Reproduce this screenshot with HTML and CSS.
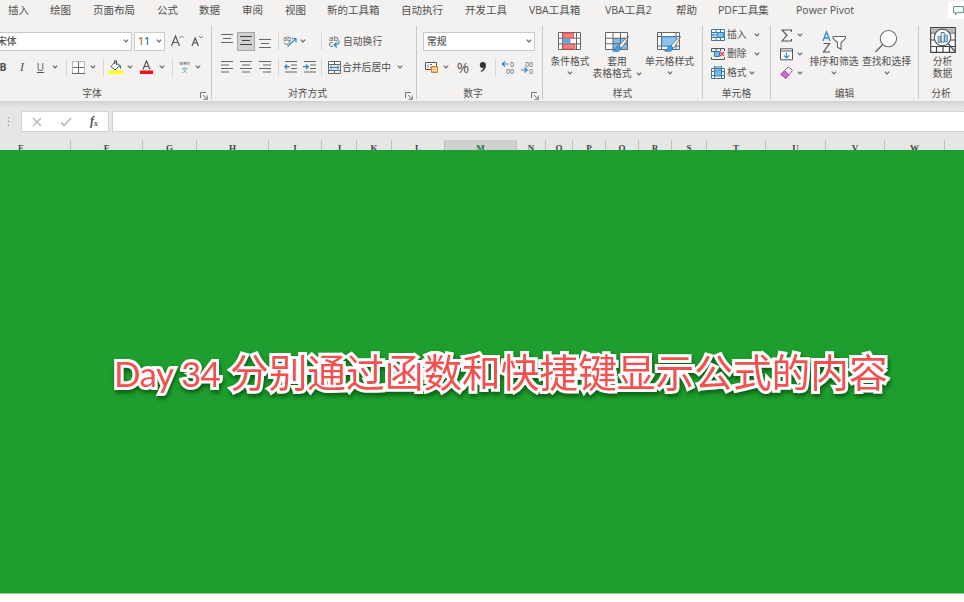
FILE: index.html
```
<!DOCTYPE html>
<html lang="zh-CN">
<head>
<meta charset="UTF-8">
<title>Day 34</title>
<link rel="stylesheet" href="styles.css">
</head>
<body>

<svg class="defs">
    <symbol id="chev" viewBox="0 0 6 4"><path d="M.8.7 3 2.9 5.2.7" fill="none" stroke="#666" stroke-width="1.2"/></symbol>
    <symbol id="launch" viewBox="0 0 8 8"><path d="M.5 6V.5H6M3 3l4 4M7.3 3.5v3.8H3.5" fill="none" stroke="#666" stroke-width=".9"/></symbol>
    <symbol id="brush" viewBox="0 0 18 17">
        <path d="M17 1C13 4 9.500 7.500 7.500 10.500l2.500 2C12.500 9.500 15.500 5 17 1z" fill="#fff" stroke="#666" stroke-width=".9"/>
        <path d="M7.300 10.500c-2-.3-3.300 1-3.500 2.800-.2 1.200-1.300 1.700-2.800 2 3.500 1.500 8 1 8.800-2.700z" fill="#3f9bdc" stroke="#1e78ba" stroke-width=".6"/>
    </symbol>
</svg>

<nav class="tabs">
    <span>插入</span>
    <span>绘图</span>
    <span>页面布局</span>
    <span>公式</span>
    <span>数据</span>
    <span>审阅</span>
    <span>视图</span>
    <span>新的工具箱</span>
    <span>自动执行</span>
    <span>开发工具</span>
    <span>VBA工具箱</span>
    <span>VBA工具2</span>
    <span>帮助</span>
    <span>PDF工具集</span>
    <span>Power Pivot</span>
    <div class="comment"><svg width="11" height="10" viewBox="0 0 11 10"><path d="M.6.600h9.800v6H4.500L2.500 8.800V6.600H.6z" fill="none" stroke="#5c8a86"/></svg></div>
</nav>

<div class="ribbon">
    <!-- font -->
    <section class="group font">
        <div class="tools">
            <div class="row font-top">
                <div class="combo"><b>宋体</b><svg class="chev"><use href="#chev"/></svg></div>
                <div class="combo size"><b><i class="o">1</i><i class="b">1</i></b><svg class="chev"><use href="#chev"/></svg></div>
                <svg width="15" height="15" viewBox="0 0 15 15"><path d="M1.500 12 5.500 2 9.500 12M3 8.500h5" fill="none" stroke="#555" stroke-width="1.200"/><path d="M9.500 4l2-2 2 2" fill="none" stroke="#4a88a8"/></svg>
                <svg width="13" height="15" viewBox="0 0 13 15"><path d="M1 12 4.200 4 7.400 12M2.200 9h4" fill="none" stroke="#555" stroke-width="1.200"/><path d="M8 2l2 2 2-2" fill="none" stroke="#4a88a8"/></svg>
            </div>
            <div class="row font-bottom">
                <span class="bold">B</span>
                <span class="italic">I</span>
                <span class="under">U</span>
                <svg class="chev"><use href="#chev"/></svg>
                <span class="sep"></span>
                <svg width="13" height="13" viewBox="0 0 13 13"><path d="M.5.500h12v12H.5z" fill="#fff" stroke="#777" stroke-dasharray="1 1"/><path d="M6.500 1v11M1 6.500h11M0 12.500h13" stroke="#666"/></svg>
                <svg class="chev"><use href="#chev"/></svg>
                <span class="sep"></span>
                <svg width="14" height="14" viewBox="0 0 14 14"><path d="M6 2 2 6.500l4 3.500 4.500-4.500zM5.500 4V.8h2V5" fill="#fff" stroke="#555"/><path d="M10 4.500c2 0 2.300 2 2 4.500-1.200-.5-1.500-2-2-4.500z" fill="#2874a8"/><path fill="#ffff18" d="M0 10.500h14V14H0z"/></svg>
                <svg class="chev"><use href="#chev"/></svg>
                <svg width="13" height="14" viewBox="0 0 13 14"><path d="M3 9.500 6.500.8 10 9.500M4.300 6.500h4.500" fill="none" stroke="#555" stroke-width="1.200"/><path fill="#f50d17" d="M0 10.500h13V14H0z"/></svg>
                <svg class="chev"><use href="#chev"/></svg>
                <span class="sep"></span>
                <span class="wen"><span>wén</span><em>文</em></span>
                <svg class="chev"><use href="#chev"/></svg>
            </div>
        </div>
        <footer><span>字体</span><svg class="launch"><use href="#launch"/></svg></footer>
    </section>

    <!-- alignment -->
    <section class="group align">
        <div class="tools">
            <div class="row align-top">
                <svg width="12" height="14" viewBox="0 0 12 14"><path d="M0 .5h12M2 4.500h8M0 8.500h12" stroke="#666"/></svg>
                <span class="pressed"><svg width="12" height="14" viewBox="0 0 12 14"><path d="M0 2.500h12M2 6.500h8M0 10.500h12" stroke="#444" stroke-width="1.200"/></svg></span>
                <svg width="12" height="14" viewBox="0 0 12 14"><path d="M0 5.500h12M2 9.500h8M0 13.500h12" stroke="#666"/></svg>
                <span class="sep"></span>
                <svg width="14" height="14" viewBox="0 0 14 14"><text x="0" y="7" class="tiny">ab</text><path d="M1 8.500 3.500 11l4-4" fill="none" stroke="#666"/><path d="M4.500 12.500 12.500 5M9 4.500h4v4" fill="none" stroke="#3d8fc0" stroke-width="1.200"/></svg>
                <svg class="chev"><use href="#chev"/></svg>
                <span></span>
                <span class="sep"></span>
                <svg width="12" height="14" viewBox="0 0 12 14"><text x="1" y="7" class="ab">ab</text><path d="M4.500 8.500c-4-.5-4 4.500 0 4" fill="none" stroke="#555"/><path d="M11 6.500c.5 3-1 4.500-4.500 4.500M8.800 8.500 6 11l2.800 2.500" fill="none" stroke="#2b8bc8" stroke-width="1.200"/></svg>
                <span class="txt">自动换行</span>
            </div>
            <div class="row align-bottom">
                <svg width="12" height="12" viewBox="0 0 12 12"><path d="M0 .5h12M0 4h8M0 7.500h12M0 11h8" stroke="#666"/></svg>
                <svg width="12" height="12" viewBox="0 0 12 12"><path d="M0 .5h12M2 4h8M0 7.500h12M2 11h8" stroke="#666"/></svg>
                <svg width="12" height="12" viewBox="0 0 12 12"><path d="M0 .5h12M4 4h8M0 7.500h12M4 11h8" stroke="#666"/></svg>
                <span class="sep"></span>
                <svg width="13" height="12" viewBox="0 0 13 12"><path d="M1 .5h12M7 4h6M7 7.500h6M1 11h12" stroke="#666"/><path d="M.8 5.700h5M3 3.500.8 5.700 3 8" fill="none" stroke="#2b83bd" stroke-width="1.200"/></svg>
                <svg width="13" height="12" viewBox="0 0 13 12"><path d="M1 .5h12M7 4h6M7 7.500h6M1 11h12" stroke="#666"/><path d="M0 5.700h5M3 3.500 5.200 5.700 3 8" fill="none" stroke="#2b83bd" stroke-width="1.200"/></svg>
                <span class="sep"></span>
                <span></span>
                <svg width="13" height="13" viewBox="0 0 13 13"><path d="M.5.500h12v12H.5zM.5 3.500h12M.5 9.500h12M6.500 0v3.500M6.500 9.500V13" fill="#fff" stroke="#666"/><path fill="#d8edf9" d="M1 4h11v5H1z"/><path d="M2 6.500h9M4 4.700 2 6.500l2 1.800M9 4.700l2 1.800-2 1.800" fill="none" stroke="#2b83bd"/></svg>
                <span class="txt">合并后居中</span>
                <svg class="chev"><use href="#chev"/></svg>
            </div>
        </div>
        <footer><span>对齐方式</span><svg class="launch"><use href="#launch"/></svg></footer>
    </section>

    <!-- number -->
    <section class="group number">
        <div class="tools">
            <div class="row number-top">
                <div class="combo"><b>常规</b><svg class="chev"><use href="#chev"/></svg></div>
            </div>
            <div class="row number-bottom">
                <svg width="14" height="12" viewBox="0 0 14 12"><path d="M.5 1.500h11v7H.5z" fill="#fff" stroke="#555"/><path d="M3 3.500v3M5 3.500h2M5 6.500h2" stroke="#666"/><path d="M6.500 5.500h6v6h-6z" fill="#f6b26b" stroke="#e07a1c"/><path d="M7 7.500h5M7 9.500h5" stroke="#fff" stroke-width=".7"/></svg>
                <svg class="chev"><use href="#chev"/></svg>
                <span class="percent">%</span>
                <svg width="8" height="12" viewBox="0 0 8 12"><circle cx="3.800" cy="4" r="3" fill="#333"/><path d="M6.800 4c.2 3.500-1.800 6-4.800 7l-.4-.9C3.600 9 4.500 7.800 4.600 6z" fill="#333"/></svg>
                <span class="sep"></span>
                <svg width="14" height="14" viewBox="0 0 14 14"><path d="M7.500 4H1.500M4 1.500 1.300 4 4 6.500" fill="none" stroke="#2b8bc8" stroke-width="1.200"/><text x="9" y="6.500" class="zero">0</text><text x="5" y="13.500" class="zero">00</text></svg>
                <svg width="14" height="14" viewBox="0 0 14 14"><path d="M1 10h6M4.500 7.500 7.200 10l-2.700 2.500" fill="none" stroke="#2b8bc8" stroke-width="1.200"/><text x="5" y="6.500" class="zero">00</text><text x="9" y="13.500" class="zero">0</text></svg>
            </div>
        </div>
        <footer><span>数字</span><svg class="launch"><use href="#launch"/></svg></footer>
    </section>

    <!-- styles -->
    <section class="group style">
        <div class="tools bigs">
            <div class="big">
                <svg width="24" height="24" viewBox="0 0 24 24"><path d="M.5 3.500h22v17H.5zM.5 9.200h22M.5 14.800h22M4.500 3.500v17M18.500 3.500v17" fill="#fff" stroke="#666"/><path d="M5 4h10.500v5H5zM5 15.300h12V20H5z" fill="#f87c80" stroke="#e5484d" stroke-width=".8"/><path d="M4.500 9.500h8v5h-8z" fill="#5aa9e3"/></svg>
                <span>条件格式</span>
                <svg class="chev"><use href="#chev"/></svg>
            </div>
            <div class="big">
                <svg width="25" height="24" viewBox="0 0 25 24"><path d="M.5 3.500h22v17H.5z" fill="#fff"/><path fill="#7dbdec" d="M8 9h15v11.500H8z"/><path d="M.5 3.500h22v17H.5zM.5 9.200h22M.5 14.800h22M8 3.500v17M15.500 3.500v17" fill="none" stroke="#666"/><use href="#brush" x="6.500" y="6" width="18" height="18"/></svg>
                <span>套用</span>
                <span class="inline">表格格式<svg class="chev"><use href="#chev"/></svg></span>
            </div>
            <div class="big">
                <svg width="25" height="24" viewBox="0 0 25 24"><path d="M.5 3.500h22v17H.5z" fill="#fff"/><path d="M.5 3.500h22v17H.5zM.5 7.500h22M4.500 3.500v17M19 3.500v17M.5 17h22" fill="none" stroke="#666"/><path fill="#8cc6ef" stroke="#4399d6" d="M5 8h14v9H5z"/><use href="#brush" x="6.500" y="6" width="18" height="18"/></svg>
                <span>单元格样式</span>
                <svg class="chev"><use href="#chev"/></svg>
            </div>
        </div>
        <footer><span>样式</span></footer>
    </section>

    <!-- cells -->
    <section class="group cells">
        <div class="tools stack">
            <div class="line">
                <svg width="14" height="12" viewBox="0 0 14 12"><path d="M.5.500h13v11H.5zM.5 3.500h13M.5 8.500h13M5 .5v3M9.500 .5v3M5 8.500v3M9.500 8.500v3" fill="#fff" stroke="#4c7391"/><path d="M6 3.500h7v5H6z" fill="#75b9ea" stroke="#2b83bd"/><path d="M1 6h5M3.500 4 1.500 6l2 2" fill="none" stroke="#2b83bd"/></svg>
                <span>插入</span>
                <svg class="chev"><use href="#chev"/></svg>
            </div>
            <div class="line">
                <svg width="14" height="12" viewBox="0 0 14 12"><path d="M.5 3V.5h13V3M.5 9v2.500h13V9M5 .5v2.500M9.500 .5v2.500M0 3.500h5" fill="none" stroke="#555"/><path d="M3.500 3.500h5v5h-5z" fill="#75b9ea" stroke="#2b83bd"/><path d="m9 4 4 4m0-4L9 8" stroke="#dc3f45" stroke-width="1.300"/></svg>
                <span>删除</span>
                <svg class="chev"><use href="#chev"/></svg>
            </div>
            <div class="line">
                <svg width="14" height="13" viewBox="0 0 14 13"><path d="M.5 2.500h13v10H.5zM.5 5.500h13M.5 9.500h13M3.500 0v12.500M10.500 0v12.500" fill="#fff" stroke="#4c7391"/><path d="M3.500 4h7v6h-7z" fill="#75b9ea" stroke="#2b83bd"/><path d="M3.500 1h7" stroke="#2b83bd"/></svg>
                <span>格式</span>
                <svg class="chev near"><use href="#chev"/></svg>
            </div>
        </div>
        <footer><span>单元格</span></footer>
    </section>

    <!-- editing -->
    <section class="group edit">
        <div class="tools">
            <div class="stack">
                <div class="line">
                    <svg width="14" height="13" viewBox="0 0 14 13"><path d="M11.500 3V1H2l5 5.300L2 12h9.500v-2" fill="none" stroke="#555" stroke-width="1.100"/></svg>
                    <svg class="chev"><use href="#chev"/></svg>
                </div>
                <div class="line">
                    <svg width="14" height="13" viewBox="0 0 14 13"><path d="M.5.800h12v11H.5zM.5 3h12" fill="#fff" stroke="#555"/><path d="M6.500 4.500V10M4 7.500l2.500 2.500L9 7.500" fill="none" stroke="#2b8bc8" stroke-width="1.200"/></svg>
                    <svg class="chev"><use href="#chev"/></svg>
                </div>
                <div class="line">
                    <svg width="14" height="13" viewBox="0 0 14 13"><path d="M8 .8 12.500 4.300 6 12.300 1 8.500z" fill="#fff" stroke="#b144b5"/><path d="M4.500 4.700 9 8.600 6 12.300 1 8.500z" fill="#c873cc" stroke="#b144b5"/></svg>
                    <svg class="chev"><use href="#chev"/></svg>
                </div>
            </div>
            <div class="big">
                <svg width="25" height="24" viewBox="0 0 25 24"><path d="M1 12 4.500 2.800 8 12M2.200 9h4.600" fill="none" stroke="#2b8bc8" stroke-width="1.300"/><path d="M1.500 14.500h6L1.500 23h6.500" fill="none" stroke="#555" stroke-width="1.200"/><path d="M11 7.500h12.500v1.800L19 13.800v6.500l-3.500-2v-4.500L11 9.300z" fill="#fff" stroke="#666" stroke-width="1.100"/></svg>
                <span>排序和筛选</span>
                <svg class="chev"><use href="#chev"/></svg>
            </div>
            <div class="big">
                <svg width="25" height="25" viewBox="0 0 25 25"><circle cx="14.500" cy="10" r="8.500" fill="#fff" stroke="#666" stroke-width="1.100"/><path d="M8.500 16.200 1 24" stroke="#666" stroke-width="1.400"/></svg>
                <span>查找和选择</span>
                <svg class="chev"><use href="#chev"/></svg>
            </div>
        </div>
        <footer><span>编辑</span></footer>
    </section>

    <!-- analysis -->
    <section class="group analyse">
        <div class="tools bigs">
            <div class="big">
                <svg width="26" height="26" viewBox="0 0 26 26"><path d="M.7.700h24.600v24.600H.7zM.7 6h24.600M.7 19.500h24.600M.7 13h24.600M6.500 19v6M13 19v6M19.500 19v6" fill="#fff" stroke="#444" stroke-width="1.200"/><path d="M1 1h24v4H1z" fill="#bbb"/><circle cx="12.500" cy="10.500" r="8.300" fill="#fff" stroke="#555" stroke-width="1.200"/><path d="M8 9.500h3v6H8zM14.500 8h3v7h-3z" fill="#9ccbec" stroke="#4586ae" stroke-width=".8"/><path d="M11.200 5.500h3V15h-3z" fill="#fff" stroke="#356d91" stroke-width=".9"/><path d="m18.500 17 6.500 7.500" stroke="#555" stroke-width="1.500"/></svg>
                <span>分析</span>
                <span>数据</span>
            </div>
        </div>
        <footer><span>分析</span></footer>
    </section>
</div>

<div class="formula">
    <svg class="grip" width="3" height="11" viewBox="0 0 3 11"><path d="M1.500 1v9" stroke="#999" stroke-width="1.300" stroke-dasharray="1.300 2.500"/></svg>
    <div class="fx">
        <svg width="10" height="10" viewBox="0 0 10 10"><path d="m1 1 8 8m0-8L1 9" stroke="#b5b5b5" stroke-width="1.300"/></svg>
        <svg width="12" height="10" viewBox="0 0 12 10"><path d="M1 5.500 4 8.500 11 1" fill="none" stroke="#b5b5b5" stroke-width="1.700"/></svg>
        <span><i>f</i><sub>x</sub></span>
    </div>
    <div class="input"></div>
</div>

<div class="columns">
    <span>E</span><span>F</span><span>G</span><span>H</span><span>I</span><span>J</span><span>K</span><span>L</span><span class="on">M</span><span>N</span><span>O</span><span>P</span><span>Q</span><span>R</span><span>S</span><span>T</span><span>U</span><span>V</span><span>W</span><span></span>
</div>

<main class="cover">
    <h1><span>Day 34</span>分别通过函数和快捷键显示公式的内容</h1>
</main>

</body>
</html>
```
FILE: styles.css
```
* {
    box-sizing: border-box;
}

body {
    margin: 0;
    width: 964px;
    height: 602px;
    overflow: hidden;
    background: #fff;
    color: #505050;
    font-family: "Open Sans", "Noto Sans CJK SC", sans-serif;
    font-size: 9.8px;
}

svg {
    display: block;
    flex: none;
}

.defs {
    display: none;
}

.chev {
    width: 6px;
    height: 4px;
}

.launch {
    width: 8px;
    height: 8px;
}

/* tabs */
.tabs {
    display: grid;
    grid-template-columns: 42px 43px 64px 42px 43px 43px 42px 74px 64px 64px 76px 71px 42px 78px 152px 16px;
    padding-left: 8px;
    height: 22px;
    background: #f3f2f1;
    font-size: 10.5px;
    line-height: 20px;
    white-space: nowrap;
}

.comment {
    height: 18px;
    margin-top: 1px;
    padding: 5px 0 0 5px;
    background: #fff;
    overflow: hidden;
}

/* ribbon */
.ribbon {
    display: flex;
    height: 80px;
    padding-top: 4px;
    background: #f3f2f1;
    border-bottom: 1px solid #d2d2d2;
}

.group {
    flex: none;
    height: 73px;
    border-right: 1px solid #c8c8c8;
    white-space: nowrap;
}

.font { width: 226px; margin-left: -14px; }
.align { width: 205px; }
.number { width: 126px; }
.style { width: 160px; }
.cells { width: 68px; }
.edit { width: 148px; }
.analyse { width: 46px; border: 0; }

.tools {
    height: 60px;
}

.group footer {
    display: flex;
    align-items: center;
    height: 15px;
    line-height: 15px;
}

.group footer span {
    flex: 1;
    text-align: center;
}

.group footer .launch {
    margin: 4px 3px 0 2px;
}

.analyse footer {
    margin-right: 2px;
}

.row {
    display: grid;
    height: 24px;
    align-items: center;
    justify-items: center;
}

.row:first-child {
    height: 29px;
    padding-top: 1px;
}

.font-top { grid-template-columns: 146px 2px 31px 24px 16px; }
.font-top .size { grid-column: 3; }
.font-bottom {
    grid-template-columns: 18px 20px 17px 12px 10px 15px 13px 8px 17px 12px 21px 9px 12px 13px 14px;
    padding-left: 8px;
}
.align-top {
    grid-template-columns: 20px 18px 20px 7px 15px 12px 8px 9px 16px 44px;
    padding-left: 5px;
}
.align-bottom {
    grid-template-columns: 20px 18px 20px 7px 17px 20px 5px 3px 14px 53px 12px;
    padding-left: 5px;
}
.number-top { padding: 0 7px 0 6px; }
.number-bottom {
    grid-template-columns: 16px 12px 22px 18px 7px 18px 20px;
    padding-left: 7px;
}

.combo {
    display: flex;
    align-items: center;
    justify-content: space-between;
    width: 100%;
    height: 19px;
    padding: 0 2px 0 3px;
    background: #fff;
    border: 1px solid #c9c9c9;
}

.font-top .combo:first-child {
    padding-left: 10px;
}

.combo b {
    font-weight: 500;
    color: #555;
}

.combo i {
    font-style: normal;
    font-weight: 600;
    font-size: 10.5px;
}

.combo .o { color: #c87b1e; }
.combo .b { color: #3485b5; }

.sep {
    width: 1px;
    height: 17px;
    background: #d6d6d6;
}

.bold { font-weight: 700; font-size: 10.5px; }
.italic { font: italic 12px "Liberation Serif", serif; }
.under { text-decoration: underline; font-size: 10px; }

.wen {
    display: grid;
    font-size: 5.5px;
    line-height: 7px;
    text-align: center;
}

.wen em {
    font-style: normal;
    font-size: 6px;
    line-height: 7px;
    color: #3b9bb8;
}

.pressed {
    display: flex;
    align-items: center;
    justify-content: center;
    width: 18px;
    height: 19px;
    background: #d0d0d0;
    border: 1px solid #a8a8a8;
}

.txt {
    justify-self: start;
    padding-left: 1px;
}

.percent { font-size: 15px; line-height: 16px; }
.tiny { font-size: 7px; fill: #555; }
.ab { font-size: 8px; fill: #555; }
.zero { font-size: 7px; fill: #555; }

/* large buttons */
.bigs {
    display: grid;
    padding-left: 4px;
    grid-template-columns: 46px 48px 57px;
}

.analyse .bigs {
    grid-template-columns: 41px;
    padding-left: 3px;
}

.big {
    display: flex;
    flex-direction: column;
    align-items: center;
    line-height: 12px;
}

.big > svg:first-child {
    margin: 3px 0;
}

.edit .big > svg:first-child {
    height: 24px;
}

.analyse .big > svg:first-child {
    margin: 1px 0 3px;
}

.big > .chev {
    margin-top: 3px;
}

.inline {
    display: flex;
    align-items: center;
    gap: 4px;
}

/* small stacked buttons */
.line {
    display: flex;
    align-items: center;
    height: 18.7px;
    line-height: 16px;
}

.cells .line { padding-left: 8px; }
.cells .line span { width: 27px; padding-left: 2px; }
.cells .line .chev { margin-left: 2px; }
.cells .line .near { margin-left: -3px; }

.edit .tools {
    display: grid;
    grid-template-columns: 37px 52px 53px;
}
.edit .line { padding-left: 9px; gap: 3px; }

/* formula bar */
.formula {
    display: flex;
    height: 38px;
    padding-top: 9px;
    background: linear-gradient(#d6d6d6, #e6e6e6 6px);
}

.grip {
    margin: 5px 11px 0 7px;
}

.fx,
.input {
    height: 21px;
    background: #fff;
    border: 1px solid #d4d4d4;
}

.fx {
    display: grid;
    grid-template-columns: 29px 29px 28px;
    align-items: center;
    justify-items: center;
    width: 88px;
    margin-right: 3px;
}

.fx span { font: bold 12px "Liberation Serif", serif; color: #555; }
.fx sub { font-size: 8px; font-style: italic; vertical-align: -1px; }

.input { flex: 1; border-right: 0; }

/* column headings, cut off by the cover below */
.columns {
    display: grid;
    grid-template-columns: 99px 72px 54px 72px 53px 35px 35px 53px 72px 29px 27px 33px 33px 33px 35px 59px 60px 59px 60px 47px;
    margin-left: -28px;
    height: 10px;
    background: #e6e6e6;
    overflow: hidden;
}

.columns span {
    height: 10px;
    padding-top: 4px;
    border-right: 1px solid #bdbdbd;
    font: bold 9px/9px "Liberation Serif", serif;
    text-align: center;
    color: #444;
}

.columns .on {
    background: #d0d0d0;
    color: #217346;
}

.cover {
    height: 444px;
    background: #1e9e2e;
    border-bottom: 1px solid #8fce97;
}

h1 {
    margin: 0;
    padding: 191px 0 0 114px;
    font: 400 38.7px/58px "Noto Sans CJK SC", sans-serif;
    white-space: nowrap;
    color: #f4504f;
    -webkit-text-stroke: 6px #fff;
    paint-order: stroke fill;
    filter: drop-shadow(1px 3px 2px rgba(0, 50, 0, .6));
}

h1 span {
    display: inline-block;
    width: 116px;
    font-family: Lato, sans-serif;
    font-size: 35px;
    letter-spacing: -.6px;
}
```
